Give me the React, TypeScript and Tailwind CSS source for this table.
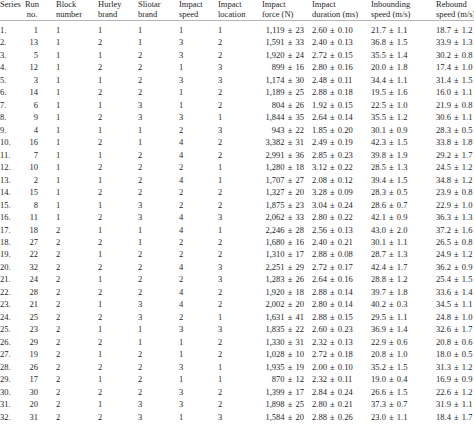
import React from "react";

type Col = {
  head: [string, string];
  box: string;
  body: string;
  headAlign: string;
};

// left edges measured off the reference: 0, 26, 56, 98, 138, 179, 218, 262, 312, 371, 436
const cols: Col[] = [
  { head: ["Series", ""], box: "w-[26px]", body: "justify-start", headAlign: "justify-start" },
  { head: ["Run", "no."], box: "w-[12px]", body: "justify-end", headAlign: "justify-center" },
  { head: ["Block", "number"], box: "w-[60px] pl-[18px]", body: "justify-start", headAlign: "justify-start" },
  { head: ["Hurley", "brand"], box: "w-[40px]", body: "justify-start", headAlign: "justify-start" },
  { head: ["Sliotar", "brand"], box: "w-[41px]", body: "justify-start", headAlign: "justify-start" },
  { head: ["Impact", "speed"], box: "w-[39px]", body: "justify-start", headAlign: "justify-start" },
  { head: ["Impact", "location"], box: "w-[44px]", body: "justify-start", headAlign: "justify-start" },
  { head: ["Impact", "force (N)"], box: "w-[42px]", body: "justify-end", headAlign: "justify-start" },
  { head: ["Impact", "duration (ms)"], box: "w-[67px] pl-[8px]", body: "justify-start", headAlign: "justify-start" },
  { head: ["Inbounding", "speed (m/s)"], box: "w-[65px]", body: "justify-start", headAlign: "justify-start" },
  { head: ["Rebound", "speed (m/s)"], box: "w-[60px]", body: "justify-start", headAlign: "justify-start" },
];

const rows: string[][] = [
  ["1.", "1", "1", "1", "1", "1", "1", "1,119 ± 23", "2.60 ± 0.10", "21.7 ± 1.1", "18.7 ± 1.2"],
  ["2.", "13", "1", "2", "1", "3", "2", "1,591 ± 33", "2.40 ± 0.13", "36.8 ± 1.5", "33.9 ± 1.3"],
  ["3.", "5", "1", "1", "2", "3", "2", "1,920 ± 24", "2.72 ± 0.15", "35.5 ± 1.4", "30.2 ± 0.8"],
  ["4.", "12", "1", "2", "2", "1", "3", "899 ± 16", "2.80 ± 0.16", "20.0 ± 1.8", "17.4 ± 1.0"],
  ["5.", "3", "1", "1", "2", "3", "3", "1,174 ± 30", "2.48 ± 0.11", "34.4 ± 1.1", "31.4 ± 1.5"],
  ["6.", "14", "1", "2", "2", "1", "2", "1,189 ± 25", "2.88 ± 0.18", "19.5 ± 1.6", "16.0 ± 1.1"],
  ["7.", "6", "1", "1", "3", "1", "2", "804 ± 26", "1.92 ± 0.15", "22.5 ± 1.0", "21.9 ± 0.8"],
  ["8.", "9", "1", "2", "3", "3", "1", "1,844 ± 35", "2.64 ± 0.14", "35.5 ± 1.2", "30.6 ± 1.1"],
  ["9.", "4", "1", "1", "1", "2", "3", "943 ± 22", "1.85 ± 0.20", "30.1 ± 0.9", "28.3 ± 0.5"],
  ["10.", "16", "1", "2", "1", "4", "2", "3,382 ± 31", "2.49 ± 0.19", "42.3 ± 1.5", "33.8 ± 1.8"],
  ["11.", "7", "1", "1", "2", "4", "2", "2,991 ± 36", "2.85 ± 0.23", "39.8 ± 1.9", "29.2 ± 1.7"],
  ["12.", "10", "1", "2", "2", "2", "1", "1,280 ± 18", "3.12 ± 0.22", "28.5 ± 1.3", "24.5 ± 1.2"],
  ["13.", "2", "1", "1", "2", "4", "1", "1,707 ± 27", "2.08 ± 0.12", "39.4 ± 1.5", "34.8 ± 1.2"],
  ["14.", "15", "1", "2", "2", "2", "2", "1,327 ± 20", "3.28 ± 0.09", "28.3 ± 0.5", "23.9 ± 0.8"],
  ["15.", "8", "1", "1", "3", "2", "2", "1,875 ± 23", "3.04 ± 0.24", "28.6 ± 0.7", "22.9 ± 1.0"],
  ["16.", "11", "1", "2", "3", "4", "3", "2,062 ± 33", "2.80 ± 0.22", "42.1 ± 0.9", "36.3 ± 1.3"],
  ["17.", "18", "2", "1", "1", "4", "1", "2,246 ± 28", "2.56 ± 0.13", "43.0 ± 2.0", "37.2 ± 1.6"],
  ["18.", "27", "2", "2", "1", "2", "2", "1,680 ± 16", "2.40 ± 0.21", "30.1 ± 1.1", "26.5 ± 0.8"],
  ["19.", "22", "2", "1", "2", "2", "2", "1,310 ± 17", "2.88 ± 0.08", "28.7 ± 1.3", "24.9 ± 1.2"],
  ["20.", "32", "2", "2", "2", "4", "3", "2,251 ± 29", "2.72 ± 0.17", "42.4 ± 1.7", "36.2 ± 0.9"],
  ["21.", "24", "2", "1", "2", "2", "3", "1,283 ± 26", "2.64 ± 0.16", "28.8 ± 1.2", "25.4 ± 1.5"],
  ["22.", "28", "2", "2", "2", "4", "2", "1,920 ± 18", "2.88 ± 0.14", "39.7 ± 1.8", "33.6 ± 1.4"],
  ["23.", "21", "2", "1", "3", "4", "2", "2,002 ± 20", "2.80 ± 0.14", "40.2 ± 0.3", "34.5 ± 1.1"],
  ["24.", "25", "2", "2", "3", "2", "1", "1,631 ± 41", "2.88 ± 0.15", "29.5 ± 1.1", "24.8 ± 1.0"],
  ["25.", "23", "2", "1", "1", "3", "3", "1,835 ± 22", "2.60 ± 0.23", "36.9 ± 1.4", "32.6 ± 1.7"],
  ["26.", "29", "2", "2", "1", "1", "2", "1,330 ± 31", "2.32 ± 0.13", "22.9 ± 0.6", "20.8 ± 0.6"],
  ["27.", "19", "2", "1", "2", "1", "2", "1,028 ± 10", "2.72 ± 0.18", "20.8 ± 1.0", "18.0 ± 0.5"],
  ["28.", "26", "2", "2", "2", "3", "1", "1,935 ± 19", "2.00 ± 0.10", "35.2 ± 1.5", "31.3 ± 1.2"],
  ["29.", "17", "2", "1", "2", "1", "1", "870 ± 12", "2.32 ± 0.11", "19.0 ± 0.4", "16.9 ± 0.9"],
  ["30.", "30", "2", "2", "2", "3", "2", "1,399 ± 17", "2.84 ± 0.24", "26.6 ± 1.5", "22.6 ± 1.2"],
  ["31.", "20", "2", "1", "3", "3", "2", "1,898 ± 25", "2.80 ± 0.21", "37.3 ± 0.7", "31.9 ± 1.1"],
  ["32.", "31", "2", "2", "3", "1", "3", "1,584 ± 20", "2.88 ± 0.26", "23.0 ± 1.1", "18.4 ± 1.7"],
];

export default function App() {
  return (
    <div className="w-[474px] h-[424px] overflow-hidden bg-white text-[#262626] font-['Liberation_Serif','Times_New_Roman',serif]">
      {/* Header */}
      <div className="h-[22px] border-b border-[#b5b5b5] text-[8.5px] leading-[10px]">
        <div className="flex -mt-px">
          {cols.map((c, i) => (
            <div key={i} className={`${c.box} shrink-0 flex flex-col whitespace-nowrap`}>
              <div className={`flex ${c.headAlign}`}>{c.head[0]}</div>
              <div className={`flex ${c.headAlign}`}>{c.head[1]}</div>
            </div>
          ))}
        </div>
      </div>

      {/* Body */}
      <div className="pt-[3px] text-[8.5px] [word-spacing:1px]">
        {rows.map((r, ri) => (
          <div key={ri} className="flex h-[12.48px] leading-[12.48px]">
            {r.map((v, ci) => (
              <div key={ci} className={`${cols[ci].box} shrink-0 flex ${cols[ci].body} whitespace-nowrap`}>
                {v}
              </div>
            ))}
          </div>
        ))}
      </div>
    </div>
  );
}
